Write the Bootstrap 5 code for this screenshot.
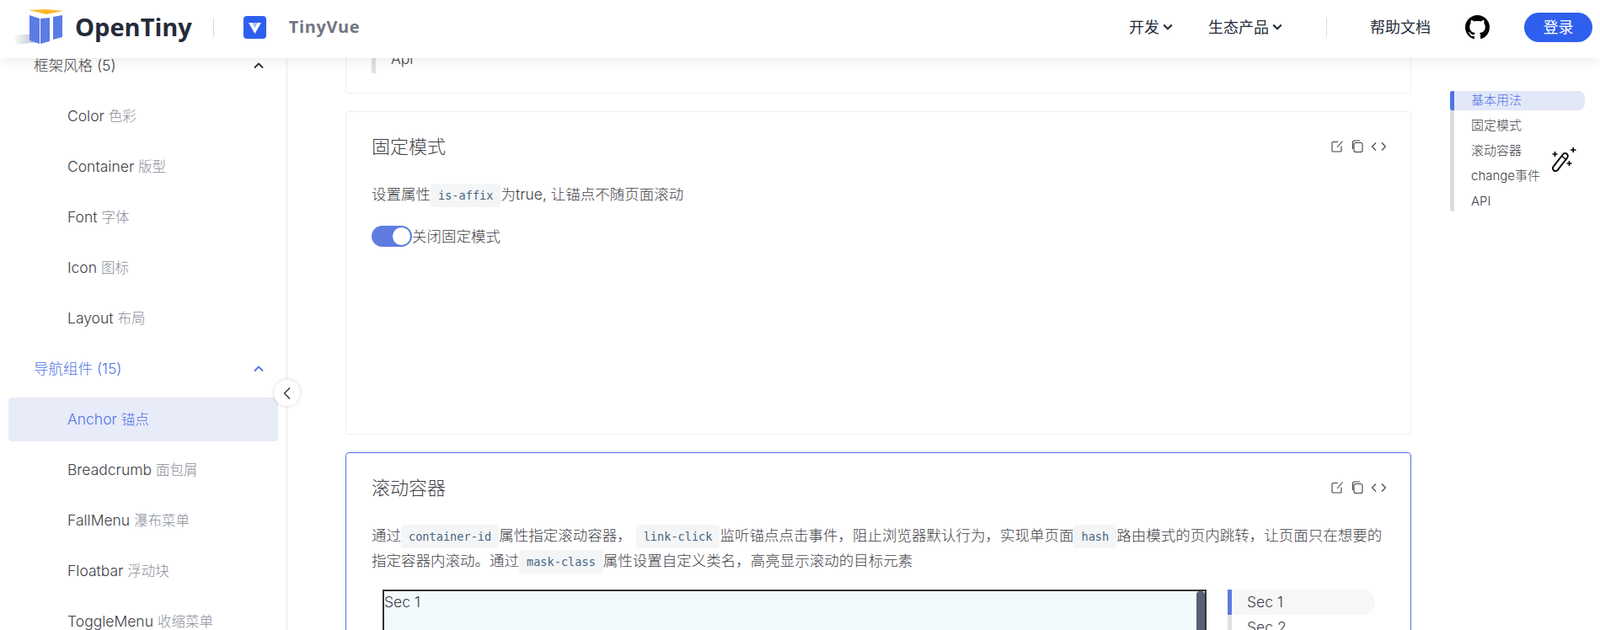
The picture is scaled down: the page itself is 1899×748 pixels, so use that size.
<!DOCTYPE html>
<html lang="zh-CN">
<head>
  <meta charset="UTF-8" />
  <meta name="viewport" content="width=device-width, initial-scale=1.0"/>
  <title>Anchor 锚点 - TinyVue</title>
  <link href="https://cdn.jsdelivr.net/npm/bootstrap@5.3.0/dist/css/bootstrap.min.css" rel="stylesheet" />
  <style>
    body {
      height: 748px;
      overflow: hidden;
      font-family: Inter, "Noto Sans CJK SC", sans-serif;
      font-size: 17.5px;
      font-weight: 300;
      color: #3f4148;
      background: #fff;
    }

    .top-bar {
      height: 69px;
      position: relative;
      z-index: 10;
      background: #fff;
      box-shadow: 0 2px 16px rgba(0, 0, 0, 0.09);
      padding: 0 9px 5px 15px;
    }
    .brand-name {
      font-family: "Open Sans", sans-serif;
      font-weight: 700;
      font-size: 29px;
      color: #252b3a;
      margin-left: 14px;
    }
    .brand-sep { width: 1px; height: 23px; background: #d9d9d9; margin: 0 35px 0 25px; }
    .brand-sub {
      font-family: "Open Sans", sans-serif;
      font-weight: 700;
      font-size: 20px;
      color: #71757f;
      margin-left: 27px;
      letter-spacing: 0.6px;
    }
    .top-link { font-size: 18px; font-weight: 400; color: #252b3a; }
    .top-gap { margin-left: 42px; }
    .top-sep { width: 1px; height: 23px; background: #dcdcdc; margin: 0 51px 0 52px; }
    .git-mark { margin-left: 41px; }
    .login-btn {
      width: 81px;
      height: 35px;
      border-radius: 18px;
      background: #2f5fee;
      color: #fff;
      font-size: 18px;
      font-weight: 400;
      border: 0;
      padding: 0;
      margin-left: 41px;
    }

    .page-body { height: 679px; overflow: hidden; }

    .side-nav {
      width: 341px;
      flex: none;
      border-right: 1px solid #e9e9ec;
      padding: 0 10px;
      position: relative;
    }
    .side-list { margin-top: -17px; }
    .side-row {
      height: 52px;
      margin-bottom: 8px;
      border-radius: 4px;
      line-height: 52px;
      white-space: nowrap;
    }
    .side-group { padding: 0 16px 0 30px; }
    .side-item { padding-left: 70px; }
    .side-item span { font-size: 16.5px; color: #8a8e99; }
    .side-blue, .side-blue span { color: #5073e5; }
    .side-on { background: #e8ebf8; }
    .collapse-btn {
      position: absolute;
      left: 325px;
      top: 382px;
      width: 31px;
      height: 31px;
      border-radius: 50%;
      background: #fff;
      box-shadow: 0 0 5px rgba(0, 0, 0, 0.16);
      z-index: 3;
    }

    .doc-col { width: 1265px; flex: none; margin-left: 69px; margin-top: -69px; }
    .demo-box {
      border: 1px solid #eeeff3;
      border-radius: 4px;
      padding: 0 30px;
      margin-bottom: 21px;
    }
    .demo-first { height: 111px; }
    .demo-second { height: 384px; padding-top: 24px; }
    .demo-third { height: 400px; padding-top: 24px; border-color: #5073e5; }
    .old-anchor { border-left: 5px solid #dfe1e6; height: 86px; padding: 56px 0 0 18px; }
    .demo-title { font-size: 22px; font-weight: 300; line-height: 34px; color: #3f4148; margin: 0 0 26px; }
    .demo-desc { line-height: 28.5px; margin: 0 0 21px; }
    .demo-third .demo-desc { margin-bottom: 19px; }
    .demo-desc code {
      font-family: "DejaVu Sans Mono", monospace;
      font-size: 13.6px;
      font-weight: 400;
      color: #476582;
      background: #f3f5f6;
      border-radius: 4px;
      padding: 6px 9px;
    }
    .tool-icons { color: #3f4148; margin-right: -1px; margin-top: 9px; }

    .switch-track {
      width: 48px;
      height: 25px;
      border-radius: 13px;
      background: #5e7ce0;
      position: relative;
      flex: none;
    }
    .switch-knob {
      position: absolute;
      right: 2px;
      top: 2px;
      width: 21px;
      height: 21px;
      border-radius: 50%;
      background: #fff;
    }

    .scroll-demo { margin-left: 13px; }
    .scroll-box {
      width: 978px;
      height: 200px;
      border: 2px solid #333;
      background: #f3fafd;
      line-height: 26px;
      position: relative;
      flex: none;
    }
    .scroll-thumb {
      position: absolute;
      right: 0;
      top: 0;
      width: 10px;
      height: 190px;
      background: #5b5f75;
      border-radius: 4px;
    }
    .sec-list { margin-left: 25px; border-left: 5px solid #dfe1e6; width: 175px; }
    .sec-row { height: 30px; line-height: 30px; padding-left: 18px; }
    .sec-on { background: #f7f7f7; border-radius: 0 15px 15px 0; position: relative; }
    .sec-on::before {
      content: "";
      position: absolute;
      left: -5px;
      top: 0;
      width: 5px;
      height: 30px;
      background: #5e7ce0;
    }

    .page-anchor { margin-left: 46px; margin-top: 39px; position: relative; width: 160px; flex: none; }
    .anchor-list { border-left: 5px solid #d9dadf; border-radius: 3px; height: 143px; }
    .anchor-row { height: 30px; line-height: 22px; padding-left: 20px; font-size: 15px; white-space: nowrap; }
    .anchor-on {
      height: 23px;
      margin-bottom: 7px;
      background: #e3e8f8;
      color: #5073e5;
      border-radius: 0 8px 8px 0;
      position: relative;
    }
    .anchor-on::before {
      content: "";
      position: absolute;
      left: -5px;
      top: 0;
      width: 5px;
      height: 23px;
      background: #5073e5;
      border-radius: 3px 0 0 3px;
    }
    .wand-icon { position: absolute; left: 120px; top: 67px; }
  </style>
</head>
<body>
  <header class="top-bar d-flex align-items-center">
    <svg width="60" height="42" viewBox="0 0 60 42">
      <defs>
        <linearGradient id="shadowGrad" x1="0" x2="1" y1="0" y2="0">
          <stop offset="0" stop-color="#fff"/>
          <stop offset="1" stop-color="#b4bacb"/>
        </linearGradient>
      </defs>
      <polygon points="0,31 30,29 30,39 5,42" fill="url(#shadowGrad)"/>
      <polygon points="19,1 40,0 60,2 40,6" fill="#fdb92c"/>
      <polygon points="20,7 32,11 32,41 20,37" fill="#5a7ce5"/>
      <polygon points="33,11 44,10 44,38 33,41" fill="#5a7ce5"/>
      <polygon points="48,9 59,7 59,33 48,36" fill="#5a7ce5"/>
    </svg>
    <span class="brand-name">OpenTiny</span>
    <span class="brand-sep"></span>
    <svg width="27" height="27" viewBox="0 0 27 27">
      <rect width="27" height="27" rx="4" fill="#2f5fee"/>
      <polygon points="6,8 11,8 13.5,14 16,8 21,8 13.5,21" fill="#fff"/>
      <polygon points="11,8 16,8 13.5,14" fill="#a9bdf8"/>
    </svg>
    <span class="brand-sub">TinyVue</span>

    <div class="ms-auto d-flex align-items-center">
      <span class="top-link d-flex align-items-center gap-1">开发
        <svg width="12" height="12" viewBox="0 0 12 12"><path d="M1.2 3.5 6 8.3 10.8 3.5" fill="none" stroke="#252b3a" stroke-width="2.2"/></svg>
      </span>
      <span class="top-link top-gap d-flex align-items-center gap-1">生态产品
        <svg width="12" height="12" viewBox="0 0 12 12"><path d="M1.2 3.5 6 8.3 10.8 3.5" fill="none" stroke="#252b3a" stroke-width="2.2"/></svg>
      </span>
      <span class="top-sep"></span>
      <span class="top-link">帮助文档</span>
      <svg class="git-mark" width="29" height="29" viewBox="0 0 16 16"><path fill="#000" d="M8 0C3.58 0 0 3.58 0 8c0 3.54 2.29 6.53 5.47 7.59.4.07.55-.17.55-.38 0-.19-.01-.82-.01-1.49-2.01.37-2.53-.49-2.69-.94-.09-.23-.48-.94-.82-1.13-.28-.15-.68-.52-.01-.53.63-.01 1.08.58 1.23.82.72 1.21 1.87.87 2.33.66.07-.52.28-.87.51-1.07-1.78-.2-3.64-.89-3.64-3.95 0-.87.31-1.59.82-2.15-.08-.2-.36-1.02.08-2.12 0 0 .67-.21 2.2.82.64-.18 1.32-.27 2-.27.68 0 1.36.09 2 .27 1.53-1.04 2.2-.82 2.2-.82.44 1.1.16 1.92.08 2.12.51.56.82 1.27.82 2.15 0 3.07-1.87 3.75-3.65 3.95.29.25.54.73.54 1.48 0 1.07-.01 1.93-.01 2.2 0 .21.15.46.55.38A8.013 8.013 0 0016 8c0-4.42-3.58-8-8-8z"/></svg>
      <button type="button" class="login-btn">登录</button>
    </div>
  </header>

  <div class="page-body d-flex">
    <aside class="side-nav">
      <div class="side-list">
        <div class="side-row side-group d-flex justify-content-between align-items-center">框架风格 (5)
          <svg width="14" height="14" viewBox="0 0 14 14"><path d="M2 9.5 7 4.5 12 9.5" fill="none" stroke="#252b3a" stroke-width="1.8"/></svg>
        </div>
        <div class="side-row side-item">Color <span>色彩</span></div>
        <div class="side-row side-item">Container <span>版型</span></div>
        <div class="side-row side-item">Font <span>字体</span></div>
        <div class="side-row side-item">Icon <span>图标</span></div>
        <div class="side-row side-item">Layout <span>布局</span></div>
        <div class="side-row side-group side-blue d-flex justify-content-between align-items-center">导航组件 (15)
          <svg width="14" height="14" viewBox="0 0 14 14"><path d="M2 9.5 7 4.5 12 9.5" fill="none" stroke="#5073e5" stroke-width="1.8"/></svg>
        </div>
        <div class="side-row side-item side-blue side-on">Anchor <span>锚点</span></div>
        <div class="side-row side-item">Breadcrumb <span>面包屑</span></div>
        <div class="side-row side-item">FallMenu <span>瀑布菜单</span></div>
        <div class="side-row side-item">Floatbar <span>浮动块</span></div>
        <div class="side-row side-item">ToggleMenu <span>收缩菜单</span></div>
      </div>
      <div class="collapse-btn d-flex align-items-center justify-content-center">
        <svg width="12" height="16" viewBox="0 0 12 16"><path d="M9 1.5 2.5 8 9 14.5" fill="none" stroke="#252b3a" stroke-width="1.3"/></svg>
      </div>
    </aside>

    <main class="doc-col">
      <section class="demo-box demo-first">
        <div class="old-anchor">Api</div>
      </section>

      <section class="demo-box demo-second">
        <div class="d-flex justify-content-between align-items-start">
          <h2 class="demo-title">固定模式</h2>
          <svg class="tool-icons" width="65" height="16" viewBox="0 0 65 16" fill="none" stroke="currentColor" stroke-width="1.1">
            <path d="M12 7.5V13a1 1 0 0 1-1 1H2a1 1 0 0 1-1-1V3.5a1 1 0 0 1 1-1h6M13.5 1.5 7 9"/>
            <rect x="27" y="3.5" width="10" height="11" rx="2"/>
            <path d="M25.5 11V3a2 2 0 0 1 2-2H34"/>
            <path d="M53 3.5 48.5 8 53 12.5M60 3.5 64.5 8 60 12.5"/>
          </svg>
        </div>
        <p class="demo-desc">设置属性<code>is-affix</code>为true, 让锚点不随页面滚动</p>
        <div class="d-flex align-items-center">
          <span class="switch-track"><span class="switch-knob"></span></span>
          <span>关闭固定模式</span>
        </div>
      </section>

      <section class="demo-box demo-third">
        <div class="d-flex justify-content-between align-items-start">
          <h2 class="demo-title">滚动容器</h2>
          <svg class="tool-icons" width="65" height="16" viewBox="0 0 65 16" fill="none" stroke="currentColor" stroke-width="1.1">
            <path d="M12 7.5V13a1 1 0 0 1-1 1H2a1 1 0 0 1-1-1V3.5a1 1 0 0 1 1-1h6M13.5 1.5 7 9"/>
            <rect x="27" y="3.5" width="10" height="11" rx="2"/>
            <path d="M25.5 11V3a2 2 0 0 1 2-2H34"/>
            <path d="M53 3.5 48.5 8 53 12.5M60 3.5 64.5 8 60 12.5"/>
          </svg>
        </div>
        <p class="demo-desc">通过<code>container-id</code>属性指定滚动容器， <code>link-click</code>监听锚点点击事件，阻止浏览器默认行为，实现单页面<code>hash</code>路由模式的页内跳转，让页面只在想要的指定容器内滚动。通过<code>mask-class</code>属性设置自定义类名，高亮显示滚动的目标元素</p>
        <div class="scroll-demo d-flex">
          <div class="scroll-box">Sec 1<span class="scroll-thumb"></span></div>
          <div class="sec-list">
            <div class="sec-row sec-on">Sec 1</div>
            <div class="sec-row">Sec 2</div>
          </div>
        </div>
      </section>
    </main>

    <nav class="page-anchor">
      <div class="anchor-list">
        <div class="anchor-row anchor-on">基本用法</div>
        <div class="anchor-row">固定模式</div>
        <div class="anchor-row">滚动容器</div>
        <div class="anchor-row">change事件</div>
        <div class="anchor-row">API</div>
      </div>
      <svg class="wand-icon" width="30" height="30" viewBox="0 0 30 30" fill="none" stroke="#000">
        <rect x="-3" y="-12" width="6.5" height="25" rx="3.2" transform="translate(11 17) rotate(38)" stroke-width="1.9"/>
        <path d="M13 10.5 18.5 15" stroke-width="1.6"/>
        <path d="M1.5 8h6M4.5 5v6M23 3h6.5M26.2 0v6M18.5 19h6M21.5 16v6" stroke-width="1.6"/>
      </svg>
    </nav>
  </div>

  <script src="https://cdn.jsdelivr.net/npm/bootstrap@5.3.0/dist/js/bootstrap.bundle.min.js"></script>
</body>
</html>
